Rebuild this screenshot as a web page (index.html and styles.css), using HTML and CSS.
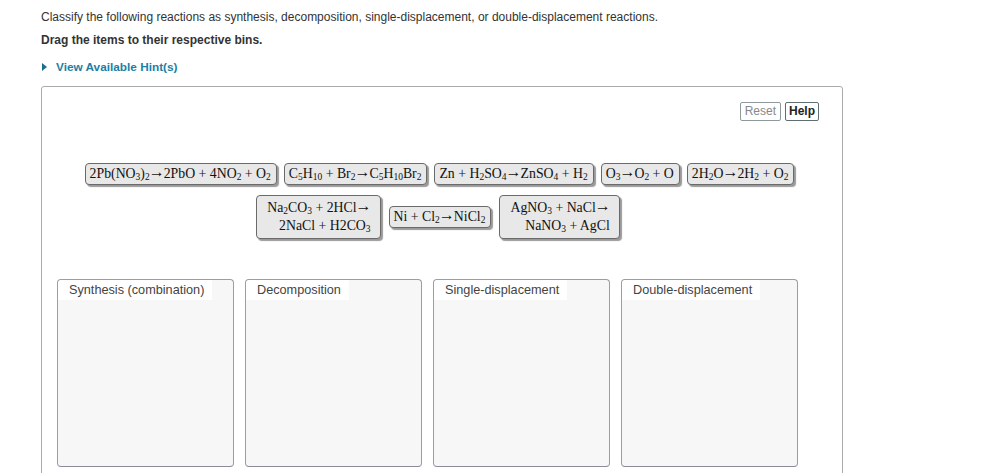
FILE: index.html
```html
<!DOCTYPE html>
<html>
<head>
<meta charset="utf-8">
<link rel="stylesheet" href="styles.css">
</head>
<body>
<div class="page">
  <p class="intro">Classify the following reactions as synthesis, decomposition, single-displacement, or double-displacement reactions.</p>
  <p class="instr">Drag the items to their respective bins.</p>
  <div class="hint"><span class="tri"></span><span class="hint-text">View Available Hint(s)</span></div>
  <div class="panel">
    <div class="toolbar">
      <span class="btn btn-disabled">Reset</span>
      <span class="btn btn-help">Help</span>
    </div>
    <div class="items">
      <div class="item">2Pb(NO<sub>3</sub>)<sub>2</sub><span class="ar">→</span>2PbO + 4NO<sub>2</sub> + O<sub>2</sub></div>
      <div class="item">C<sub>5</sub>H<sub>10</sub> + Br<sub>2</sub><span class="ar">→</span>C<sub>5</sub>H<sub>10</sub>Br<sub>2</sub></div>
      <div class="item">Zn + H<sub>2</sub>SO<sub>4</sub><span class="ar">→</span>ZnSO<sub>4</sub> + H<sub>2</sub></div>
      <div class="item">O<sub>3</sub><span class="ar">→</span>O<sub>2</sub> + O</div>
      <div class="item">2H<sub>2</sub>O<span class="ar">→</span>2H<sub>2</sub> + O<sub>2</sub></div>
    </div>
    <div class="items items-row2">
      <div class="item item-2line"><span class="l1">Na<sub>2</sub>CO<sub>3</sub> + 2HCl<span class="ar">→</span></span><span class="l2">2NaCl + H2CO<sub>3</sub></span></div>
      <div class="item">Ni + Cl<sub>2</sub><span class="ar">→</span>NiCl<sub>2</sub></div>
      <div class="item item-2line"><span class="l1">AgNO<sub>3</sub> + NaCl<span class="ar">→</span></span><span class="l2">NaNO<sub>3</sub> + AgCl</span></div>
    </div>
    <div class="bins">
      <div class="bin"><div class="bin-label">Synthesis (combination)</div></div>
      <div class="bin"><div class="bin-label">Decomposition</div></div>
      <div class="bin"><div class="bin-label">Single-displacement</div></div>
      <div class="bin"><div class="bin-label">Double-displacement</div></div>
    </div>
  </div>
</div>
</body>
</html>
```
FILE: styles.css
```css
html, body {
  margin: 0;
  padding: 0;
  background: #ffffff;
}
body {
  font-family: "Liberation Sans", Arial, sans-serif;
  font-size: 12px;
  color: #333333;
  overflow: hidden;
}
.page {
  padding: 9px 0 0 41px;
}
.intro {
  margin: 0;
  line-height: 16px;
  color: #333;
}
.instr {
  margin: 7px 0 0 0;
  line-height: 16px;
  font-weight: bold;
  color: #333;
}
.hint {
  margin-top: 11px;
  height: 16px;
  display: flex;
  align-items: center;
}
.tri {
  width: 0;
  height: 0;
  border-top: 4.5px solid transparent;
  border-bottom: 4.5px solid transparent;
  border-left: 5px solid #1a6e8e;
  margin-left: 1px;
  margin-right: 9px;
}
.hint-text {
  font-weight: bold;
  color: #1b7fa6;
  line-height: 16px;
  font-size: 11.8px;
}
.panel {
  margin-top: 11px;
  width: 800px;
  height: 420px;
  border: 1px solid #aaaaaa;
  border-radius: 3px;
  box-sizing: content-box;
}
.toolbar {
  display: flex;
  justify-content: flex-end;
  gap: 4px;
  padding: 15px 23px 0 0;
}
.btn {
  font-size: 12px;
  line-height: 17px;
  height: 17px;
  padding: 0 4px;
  border: 1px solid #5f6e72;
  border-radius: 2px;
  background: #fff;
}
.btn-disabled {
  color: #888;
  border-color: #8f9a9c;
}
.btn-help {
  font-weight: bold;
  color: #222;
  padding: 0 3px;
}
.items {
  display: flex;
  justify-content: center;
  align-items: center;
  gap: 7px;
  margin-top: 42px;
  padding-right: 5px;
}
.items-row2 {
  margin-top: 10px;
  gap: 8px;
  padding-right: 8px;
}
.item {
  font-family: "Liberation Serif", "Times New Roman", serif;
  font-size: 13.8px;
  color: #111;
  background: #e8e8e8;
  border: 1px solid #6a6a6a;
  border-radius: 4px;
  box-shadow: 2px 2px 1px #9a9a9a;
  padding: 2px 5px 2px 4px;
  line-height: 16px;
  white-space: nowrap;
}
.item sub {
  font-size: 9.5px;
  line-height: 0;
  vertical-align: -2px;
}
.ar {
  font-family: "Liberation Serif", serif;
  font-size: 16px;
  line-height: 0;
  vertical-align: 1px;
  margin: 0 -1px;
}
.item-2line {
  display: flex;
  flex-direction: column;
  padding: 3px 9px 3px 10px;
  line-height: 18px;
}
.item-2line .l2 {
  text-align: right;
}
.bins {
  display: flex;
  gap: 11px;
  margin-top: 40px;
  padding-left: 15px;
}
.bin {
  width: 175px;
  height: 186px;
  border: 1px solid #9c9aab;
  border-bottom-color: #8c8a9b;
  border-radius: 4px;
  background: #f7f7f7;
}
.bin-label {
  display: inline-block;
  background: #ffffff;
  color: #444;
  font-size: 12.7px;
  line-height: 20px;
  height: 20px;
  padding: 0 8px 0 11px;
  border-top-left-radius: 4px;
}
```
